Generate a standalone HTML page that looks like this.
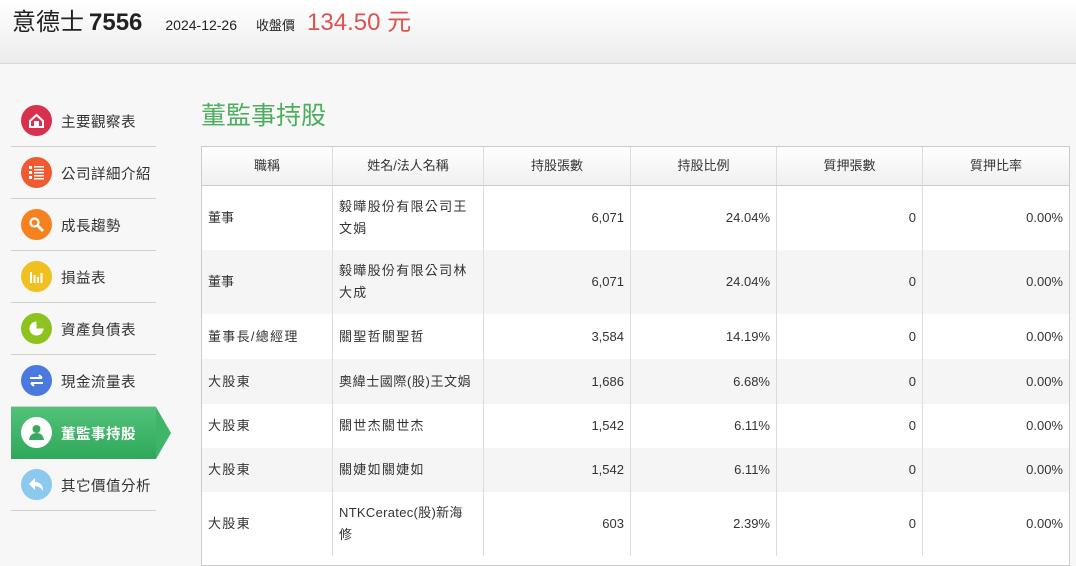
<!DOCTYPE html>
<html><head><meta charset="utf-8"><style>
*{margin:0;padding:0;box-sizing:border-box}
body{width:1076px;height:549px;overflow:hidden;background:#f7f7f7;font-family:"Liberation Sans","Noto Sans CJK TC",sans-serif;color:#222;position:relative}
.hdr{position:absolute;left:0;top:0;width:1076px;height:64px;background:linear-gradient(#fff,#ececec);border-bottom:1px solid #d8d8d8}
.hl{position:absolute;left:12px;top:6px;display:flex;align-items:baseline;white-space:nowrap;line-height:34px}
.nav{position:absolute;left:11px;width:145px;height:52px;border-bottom:1px solid #d0d0d0}
.nav .ic{position:absolute;left:10px;top:10px;width:31px;height:31px;border-radius:50%}
.nav .t{position:absolute;left:50px;top:16px;font-size:14.5px;color:#333;letter-spacing:.5px}
.act{background:linear-gradient(#52c27a,#2fa85a);border-bottom:none}
.act::after{content:"";position:absolute;left:145px;top:0;border-left:15px solid #3fb568;border-top:26px solid transparent;border-bottom:26px solid transparent}
.act .t{color:#fff;font-weight:bold}
.tbl{position:absolute;left:201px;top:146px;width:869px;height:420px;border:1px solid #ccc;background:#fff}
.row{position:absolute;left:0;width:867px}
.c{position:absolute;top:0;height:100%;border-right:1px solid #ddd;font-size:13px;color:#333;display:flex;align-items:center;padding:0 6px;line-height:22px}
.n{letter-spacing:1.3px;padding-right:8px}
.r{justify-content:flex-end}
.h .c{justify-content:center}
</style></head><body>
<div class="hdr">
<div class="hl">
<span style="font-size:24px">意德士</span>
<span style="font-size:24px;font-weight:bold;margin-left:5px">7556</span>
<span style="font-size:14px;margin-left:23px">2024-12-26</span>
<span style="font-size:13px;margin-left:19px">收盤價</span>
<span style="font-size:24px;color:#d9534f;margin-left:12px">134.50 元</span>
</div>
</div>
<div style="position:absolute;left:201px;top:96px;font-size:25px;color:#4cae5c">董監事持股</div>

<div class="nav" style="top:95px"><div class="ic" style="background:#d9304e"><svg width="31" height="31"><path d="M9 16L15.5 10L22 16V22H9Z" fill="none" stroke="#fff" stroke-width="2"/><rect x="13" y="16" width="5" height="6" fill="#fff"/></svg></div><div class="t">主要觀察表</div></div>
<div class="nav" style="top:147px"><div class="ic" style="background:#ef5a30"><svg width="31" height="31" fill="#fff"><rect x="8" y="9" width="3" height="3"/><rect x="8" y="14" width="3" height="3"/><rect x="8" y="19" width="3" height="3"/><rect x="13" y="9" width="10" height="1.5"/><rect x="13" y="12" width="10" height="1.5"/><rect x="13" y="15" width="10" height="1.5"/><rect x="13" y="18" width="10" height="1.5"/><rect x="13" y="21" width="10" height="1.5"/></svg></div><div class="t">公司詳細介紹</div></div>
<div class="nav" style="top:199px"><div class="ic" style="background:#f5821f"><svg width="31" height="31"><circle cx="13.5" cy="13.5" r="4" fill="none" stroke="#fff" stroke-width="2.2"/><path d="M16.5 16.5L22 22" stroke="#fff" stroke-width="2.8"/></svg></div><div class="t">成長趨勢</div></div>
<div class="nav" style="top:251px"><div class="ic" style="background:#f0c020"><svg width="31" height="31" fill="#fff"><rect x="9" y="11" width="2" height="11"/><rect x="12.5" y="14" width="2" height="8"/><rect x="16" y="16" width="2" height="6"/><rect x="19.5" y="12" width="2" height="10"/></svg></div><div class="t">損益表</div></div>
<div class="nav" style="top:303px"><div class="ic" style="background:#8dc21f"><svg width="31" height="31"><circle cx="15.5" cy="15.5" r="7" fill="#fff"/><path d="M15.5 15.5V8.5A7 7 0 0 1 22.5 15.5Z" fill="#8dc21f"/></svg></div><div class="t">資產負債表</div></div>
<div class="nav" style="top:355px"><div class="ic" style="background:#4a79e0"><svg width="31" height="31" fill="none" stroke="#fff" stroke-width="2"><path d="M9 13H21M18 10L21 13M22 18H10M13 21L10 18"/></svg></div><div class="t">現金流量表</div></div>
<div class="nav act" style="top:407px"><div class="ic" style="background:#fff"><svg width="31" height="31" fill="#3aaa5f"><circle cx="15.5" cy="12" r="4"/><path d="M8 23Q9 16 15.5 16Q22 16 23 23Z"/></svg></div><div class="t">董監事持股</div></div>
<div class="nav" style="top:459px"><div class="ic" style="background:#8cc9ef"><svg width="31" height="31"><path d="M8 15L14 9V13Q22 13 22 22Q19 17 14 17V21Z" fill="#fff"/></svg></div><div class="t">其它價值分析</div></div>

<div class="tbl">
<div class="row h" style="top:0;height:39px;background:linear-gradient(#fff,#f0f0f0);border-bottom:1px solid #ccc">
<div class="c" style="left:0;width:131px">職稱</div><div class="c" style="left:131px;width:151px">姓名/法人名稱</div><div class="c" style="left:282px;width:147px">持股張數</div><div class="c" style="left:429px;width:146px">持股比例</div><div class="c" style="left:575px;width:146px">質押張數</div><div class="c" style="left:721px;width:146px;border:none">質押比率</div>
</div>
<div class="row" style="top:39px;height:64px"><div class="c" style="left:0;width:131px">董事</div><div class="c n" style="left:131px;width:151px">毅曄股份有限公司王文娟</div><div class="c r" style="left:282px;width:147px">6,071</div><div class="c r" style="left:429px;width:146px">24.04%</div><div class="c r" style="left:575px;width:146px">0</div><div class="c r" style="left:721px;width:146px;border:none">0.00%</div></div>
<div class="row" style="top:103px;height:64px;background:#f5f5f5"><div class="c" style="left:0;width:131px">董事</div><div class="c n" style="left:131px;width:151px">毅曄股份有限公司林大成</div><div class="c r" style="left:282px;width:147px">6,071</div><div class="c r" style="left:429px;width:146px">24.04%</div><div class="c r" style="left:575px;width:146px">0</div><div class="c r" style="left:721px;width:146px;border:none">0.00%</div></div>
<div class="row" style="top:167px;height:45px"><div class="c n" style="left:0;width:131px">董事長/總經理</div><div class="c n" style="left:131px;width:151px">關聖哲關聖哲</div><div class="c r" style="left:282px;width:147px">3,584</div><div class="c r" style="left:429px;width:146px">14.19%</div><div class="c r" style="left:575px;width:146px">0</div><div class="c r" style="left:721px;width:146px;border:none">0.00%</div></div>
<div class="row" style="top:212px;height:45px;background:#f5f5f5"><div class="c n" style="left:0;width:131px">大股東</div><div class="c" style="left:131px;width:151px;white-space:nowrap;letter-spacing:.6px">奧緯士國際(股)王文娟</div><div class="c r" style="left:282px;width:147px">1,686</div><div class="c r" style="left:429px;width:146px">6.68%</div><div class="c r" style="left:575px;width:146px">0</div><div class="c r" style="left:721px;width:146px;border:none">0.00%</div></div>
<div class="row" style="top:257px;height:44px"><div class="c n" style="left:0;width:131px">大股東</div><div class="c n" style="left:131px;width:151px">關世杰關世杰</div><div class="c r" style="left:282px;width:147px">1,542</div><div class="c r" style="left:429px;width:146px">6.11%</div><div class="c r" style="left:575px;width:146px">0</div><div class="c r" style="left:721px;width:146px;border:none">0.00%</div></div>
<div class="row" style="top:301px;height:44px;background:#f5f5f5"><div class="c n" style="left:0;width:131px">大股東</div><div class="c n" style="left:131px;width:151px">關婕如關婕如</div><div class="c r" style="left:282px;width:147px">1,542</div><div class="c r" style="left:429px;width:146px">6.11%</div><div class="c r" style="left:575px;width:146px">0</div><div class="c r" style="left:721px;width:146px;border:none">0.00%</div></div>
<div class="row" style="top:345px;height:64px"><div class="c n" style="left:0;width:131px">大股東</div><div class="c" style="left:131px;width:151px;padding-right:14px;letter-spacing:.3px">NTKCeratec(股)新海修</div><div class="c r" style="left:282px;width:147px">603</div><div class="c r" style="left:429px;width:146px">2.39%</div><div class="c r" style="left:575px;width:146px">0</div><div class="c r" style="left:721px;width:146px;border:none">0.00%</div></div>
</div>
</body></html>
